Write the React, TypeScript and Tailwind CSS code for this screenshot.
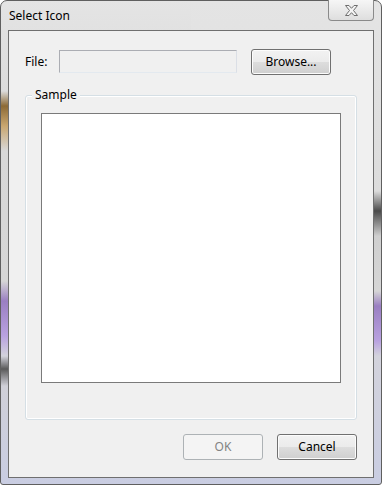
import React from "react";

const font = { fontFamily: '"Noto Sans", "Open Sans", sans-serif' };

const Button: React.FC<{ label: string; disabled?: boolean }> = ({ label, disabled }) => {
  if (disabled) {
    return (
      <div className="flex h-[26px] w-[80px] items-center justify-center rounded-[3px] border border-[#adb2b5] bg-[#f4f4f4] text-[12px] text-[#838383]">
        {label}
      </div>
    );
  }
  return (
    <div className="flex h-[26px] w-[80px] items-center justify-center rounded-[3px] border border-[#707070] bg-[linear-gradient(to_bottom,#f2f2f2_0%,#ebebeb_50%,#dddddd_51%,#cfcfcf_100%)] text-[12px] text-black shadow-[inset_0_0_0_1px_#fcfcfc]">
      {label}
    </div>
  );
};

const CloseGlyph = () => (
  <svg width="15" height="11" viewBox="0 0 15 11">
    <path
      d="M1.5 0.5 H5 L7.5 3.3 L10 0.5 H13.5 L9.5 5.5 L13.5 10.5 H10 L7.5 7.7 L5 10.5 H1.5 L5.5 5.5 Z"
      fill="#f4f4f4"
      stroke="#6e6e6e"
      strokeWidth="1"
      strokeLinejoin="round"
    />
  </svg>
);

export default function App() {
  return (
    <div
      className="flex h-[485px] w-[382px] flex-col rounded-t-[7px] rounded-b-[3px] border border-[#5f5f5f] [background:linear-gradient(to_bottom,#e4e4e4_0px,#dcdcdc_90px,#8c6a36_105px,#c9a770_125px,#d8d8d8_150px,#d6d6d6_280px,#9a7fc2_300px,#b9a2e0_335px,#d3d3dc_355px,#5a5a5a_368px,#d0d0d8_385px,#c9cde2_485px)_left/50%_100%_no-repeat,linear-gradient(to_bottom,#e4e4e4_0px,#dcdcdc_190px,#4a4a4a_210px,#cfcfcf_235px,#d6d6d6_290px,#9a7fc2_305px,#b9a2e0_340px,#d3d3dc_355px,#c9cde2_485px)_right/50%_100%_no-repeat] px-[7px] pb-[6px] text-black"
      style={font}
    >
      <div className="flex h-[29px] shrink-0 items-start justify-between">
        <div className="pl-[1px] pt-[6px] text-[12px] leading-[18px]">Select Icon</div>
        <div className="-mt-[1px] flex h-[21px] w-[46px] items-center justify-center rounded-b-[4px] border border-t-0 border-[#8a8a8a] bg-[linear-gradient(to_bottom,#f6f6f6,#dedede)]">
          <CloseGlyph />
        </div>
      </div>
      <div className="flex flex-1 flex-col border border-[#6f6f6f] bg-[#f0f0f0] px-4 pt-[18px]">
        <div className="flex h-[25px] items-center">
          <div className="w-[34px] text-[12px]">File:</div>
          <div className="h-[23px] w-[178px] border border-[#abadb3] border-b-[#e3e9ef] border-r-[#dbdfe6] bg-[#f0f0f0]"></div>
          <div className="ml-[14px]">
            <Button label="Browse..." />
          </div>
        </div>
        <div className="relative mt-[21px] h-[325px] rounded-[3px] border border-[#d5dfe5] px-[15px] pt-[17px] shadow-[inset_0_0_0_1px_#ffffff]">
          <div className="absolute -top-[10px] left-[6px] bg-[#f0f0f0] px-[3px] text-[12px] leading-[18px]">
            Sample
          </div>
          <div className="h-[270px] w-[300px] border border-[#7a7a7a] bg-white"></div>
        </div>
        <div className="mt-[14px] flex justify-end gap-[14px]">
          <Button label="OK" disabled />
          <Button label="Cancel" />
        </div>
      </div>
    </div>
  );
}
